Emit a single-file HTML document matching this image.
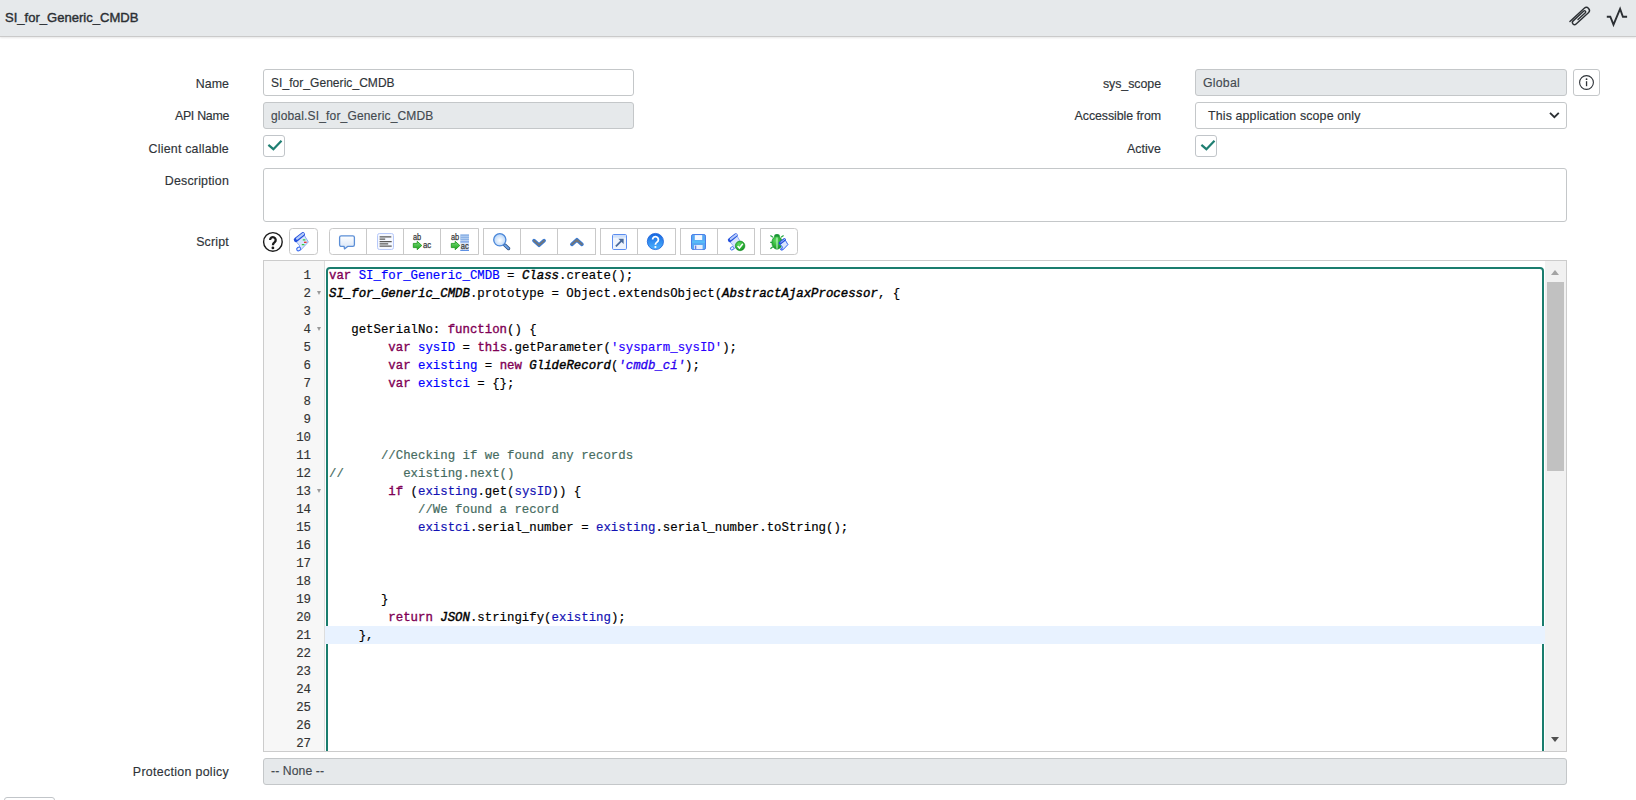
<!DOCTYPE html>
<html lang="en">
<head>
<meta charset="utf-8">
<title>SI_for_Generic_CMDB | Script Include</title>
<style>
*{box-sizing:border-box;margin:0;padding:0}
html,body{width:1636px;height:800px;overflow:hidden;background:#fff}
body{font-family:"Liberation Sans",sans-serif;font-size:12.4px;color:#2e3338;position:relative;-webkit-text-stroke:0.15px}
.abs{position:absolute}
#hdr{position:absolute;left:0;top:0;width:1636px;height:37px;background:#e6e9eb;border-bottom:1px solid #cacaca;box-shadow:0 1px 2px rgba(0,0,0,.10)}
#title{position:absolute;left:5px;top:9px;transform:translateY(0.6px);font-size:13.05px;font-weight:normal;-webkit-text-stroke:0.4px #2b2f33;color:#2b2f33;white-space:nowrap;line-height:16px}
.lbl{position:absolute;text-align:right;white-space:nowrap;line-height:16px;height:16px;color:#2e3338}
.l1{right:1407px}
.l2{right:475px}
.inp{position:absolute;height:27px;border:1px solid #c4c7c9;border-radius:3px;background:#fff;line-height:25px;padding-left:7px;white-space:nowrap;color:#2e3338}
.ro{background:#e6e9eb;color:#444a50}
.chk{position:absolute;width:22px;height:22px;border:1px solid #c1c5c9;border-radius:3px;background:#fff}

#ed{overflow:hidden}
#gut{position:absolute;left:0;top:0;width:61px;height:490px;background:#f7f7f7;border-right:1px solid #ddd}
.ln{position:absolute;left:0;width:47px;text-align:right;height:18px;line-height:18px;font-family:"Liberation Mono",monospace;font-size:12.37px;color:#333}
.fold{position:absolute;left:52.5px;width:0;height:0;border-left:2.75px solid transparent;border-right:2.75px solid transparent;border-top:4.2px solid #999}
#focus{position:absolute;left:62px;top:6px;width:1218px;height:500px;border:2px solid #1a7d6e;border-radius:4px}
#act{position:absolute;left:62px;top:365px;width:1219px;height:18px;background:#e8f2ff}
.cl{position:absolute;left:65px;height:18px;line-height:18px;white-space:pre;font-family:"Liberation Mono",monospace;font-size:12.37px;color:#000;-webkit-text-stroke:0.18px}
.k{color:#7f0055;-webkit-text-stroke:0.35px #7f0055}.d{color:#0000ff}.v{color:#1212b4}.s{color:#2a00ff}.c{color:#456b60}.g{font-weight:normal;font-style:italic;color:#000;-webkit-text-stroke:0.42px #000}.t{font-style:italic;font-weight:normal;color:#2a00f0;-webkit-text-stroke:0.3px #2a00f0}
#sb{position:absolute;left:1281px;top:0;width:21px;height:490px;background:#f1f1f1}
#sbt{position:absolute;left:2px;top:21px;width:17px;height:189px;background:#c1c1c1}
.arr{position:absolute;left:6px;width:0;height:0;border-left:4.5px solid transparent;border-right:4.5px solid transparent}
</style>
</head>
<body>
<div id="hdr">
  <div id="title">SI_for_Generic_CMDB</div>
  <svg class="abs" style="left:1560px;top:0px" width="76" height="36" viewBox="1560 0 76 36"><g fill="none" stroke="#2b2f33" stroke-linecap="round" stroke-linejoin="round" stroke-width="1.4" transform="translate(1580.3 16.1) rotate(-42.7)"><path d="M-11.3 -3.05 L8.2 -3.05 A3.05 3.05 0 0 1 8.2 3.05 L-8.5 3.05 A2.2 2.2 0 0 1 -8.5 -1.35 L6 -1.35 A1.15 1.15 0 0 1 6 0.95 L-4 0.95"/></g><path d="M1606.8 16.7 H1610.3 L1613.5 24.7 L1620.1 8.9 L1622.9 16.7 H1627.1" fill="none" stroke="#2b2f33" stroke-width="1.85" stroke-linejoin="miter" stroke-miterlimit="6" stroke-linecap="butt"/></svg>
</div>

<!-- left column -->
<div class="lbl l1" style="top:76px;letter-spacing:0.05px">Name</div>
<div class="inp" style="left:263px;top:69px;width:371px;font-size:12px;letter-spacing:0.05px;line-height:27px">SI_for_Generic_CMDB</div>
<div class="lbl l1" style="top:108px;letter-spacing:-0.3px">API Name</div>
<div class="inp ro" style="left:263px;top:102px;width:371px;font-size:12px;letter-spacing:0.17px;line-height:27px">global.SI_for_Generic_CMDB</div>
<div class="lbl l1" style="top:141px;letter-spacing:0.22px">Client callable</div>
<div class="chk" style="left:263px;top:135px"><svg width="20" height="20" viewBox="0 0 20 20" style="position:absolute;left:0;top:0"><path d="M4.4 8.8 L9.4 13.2 L17.5 4.7" fill="none" stroke="#1f7f72" stroke-width="2.2" stroke-linecap="butt" stroke-linejoin="miter"/></svg></div>
<div class="lbl l1" style="top:173px;letter-spacing:0.2px">Description</div>
<div class="inp" style="left:263px;top:168px;width:1304px;height:54px"></div>
<div class="lbl l1" style="top:234px;letter-spacing:0.2px">Script</div>

<svg id="tb" class="abs" style="left:258px;top:224px" width="546" height="36" viewBox="258 224 546 36">
<defs>
<linearGradient id="gB" x1="0" y1="0" x2="0" y2="1"><stop offset="0" stop-color="#ffffff"/><stop offset="1" stop-color="#d6e4f7"/></linearGradient>
<radialGradient id="gM" cx="0.5" cy="0.55" r="0.6"><stop offset="0" stop-color="#ffffff"/><stop offset="1" stop-color="#a9cdf7"/></radialGradient>
<linearGradient id="gH" x1="0" y1="0" x2="0" y2="1"><stop offset="0" stop-color="#1565e0"/><stop offset="1" stop-color="#4db4ff"/></linearGradient>
<radialGradient id="gG" cx="0.4" cy="0.35" r="0.7"><stop offset="0" stop-color="#5fe05f"/><stop offset="1" stop-color="#0f8f1f"/></radialGradient>
<linearGradient id="gA" x1="0" y1="0" x2="0" y2="1"><stop offset="0" stop-color="#7be07b"/><stop offset="1" stop-color="#18a018"/></linearGradient>
</defs>
<!-- button frames -->
<g fill="#fff" stroke="#c9c9c9" stroke-width="1">
<rect x="289.5" y="228.5" width="28" height="26" rx="3"/>
<path d="M332.5 228.5 H478.5 V254.5 H332.5 a3 3 0 0 1 -3 -3 V231.5 a3 3 0 0 1 3 -3 z"/>
<rect x="483.5" y="228.5" width="112" height="26"/>
<rect x="600.5" y="228.5" width="75" height="26"/>
<rect x="680.5" y="228.5" width="74" height="26"/>
<path d="M760.5 228.5 H794.5 a3 3 0 0 1 3 3 V251.5 a3 3 0 0 1 -3 3 H760.5 z"/>
<path d="M366.5 228.5 V254.5 M403.5 228.5 V254.5 M440.5 228.5 V254.5 M520.5 228.5 V254.5 M557.5 228.5 V254.5 M637.5 228.5 V254.5 M717.5 228.5 V254.5" fill="none"/>
</g>
<!-- 1 help outline -->
<circle cx="272.9" cy="241.9" r="9.3" fill="#fff" stroke="#1c1c1c" stroke-width="1.4"/>
<path d="M270.1 239.9 a2.8 2.8 0 1 1 4.6 2.2 c-1.3 1 -1.8 1.7 -1.8 3.1" fill="none" stroke="#1c1c1c" stroke-width="2.3"/>
<circle cx="272.9" cy="247.9" r="1.4" fill="#1c1c1c"/>
<!-- 2 script -->
<g id="scr">
<g id="scrb">
<path d="M295.4 240.8 L303.9 234.6 L308.3 242 L300.6 250.2 L296.8 249.8 L299.9 246 z" fill="#d9e5fd" stroke="#7fa0f2" stroke-width="0.9" stroke-linejoin="round"/>
<path d="M296 239.8 L302.8 234.4" stroke="#2450dc" stroke-width="4.4" stroke-linecap="round"/>
<path d="M297.1 238.6 L303.2 233.9" stroke="#b4cbfb" stroke-width="2.3" stroke-linecap="round"/>
<ellipse cx="298.7" cy="248.9" rx="2.1" ry="1.7" transform="rotate(-35 298.7 248.9)" fill="#e6eeff" stroke="#3a6cf0" stroke-width="1"/>
</g>
<path d="M302.8 239.9 H305.4 M301.8 244.7 H304.4" stroke="#2ecc40" stroke-width="1.3"/>
<path d="M304 242.3 H306.6" stroke="#e53030" stroke-width="1.3"/>
</g>
<!-- 3 comment -->
<path d="M341.2 235.8 H352.8 a1.6 1.6 0 0 1 1.6 1.6 V244.8 a1.6 1.6 0 0 1 -1.6 1.6 H347.6 L344.5 248.9 L344.1 246.4 H341.2 a1.6 1.6 0 0 1 -1.6 -1.6 V237.4 a1.6 1.6 0 0 1 1.6 -1.6 z" fill="url(#gB)" stroke="#5b8ed6" stroke-width="1.3" stroke-linejoin="round"/>
<!-- 4 lines -->
<rect x="377.5" y="233.5" width="16" height="16" rx="2" fill="#f5f8ff" stroke="#b7c9fa" stroke-width="1"/>
<path d="M379.6 236.9 H391.3 M379.6 239.2 H385.2 M379.6 241.5 H391.7 M379.6 243.8 H388.2 M379.6 246.1 H391.7" stroke="#5a5a5a" stroke-width="1.25"/>
<!-- 5 replace -->
<g font-family="Liberation Sans, sans-serif" font-size="8.6" fill="#3a3a3a" stroke="#3a3a3a" stroke-width="0.25">
<text x="413" y="239.8" textLength="8.2" lengthAdjust="spacingAndGlyphs">ab</text>
<text x="423" y="247.8" textLength="8.2" lengthAdjust="spacingAndGlyphs">ac</text>
<text x="451" y="239.8" textLength="8.2" lengthAdjust="spacingAndGlyphs">ab</text>
</g>
<path id="arw" d="M413.3 243.4 H417.2 V241.3 L421.8 245.5 L417.2 249.7 V247.6 H413.3 z" fill="url(#gA)" stroke="#149414" stroke-width="0.8" stroke-linejoin="round"/>
<!-- 6 replace all -->
<path d="M451.3 243.4 H455.2 V241.3 L459.8 245.5 L455.2 249.7 V247.6 H451.3 z" fill="url(#gA)" stroke="#149414" stroke-width="0.8" stroke-linejoin="round"/>
<rect x="460.3" y="234.3" width="8.7" height="6.3" fill="#8db3e6"/>
<path d="M460.3 236.4 H469 M460.3 238.5 H469" stroke="#b9d2f2" stroke-width="0.8"/>
<rect x="460.3" y="241.6" width="8.7" height="9" fill="#dbe6f5"/>
<path d="M460.3 241.9 H469 M460.3 250.4 H469" stroke="#3a78e0" stroke-width="0.9"/>
<text x="460.8" y="248.6" font-family="Liberation Sans, sans-serif" font-size="8.6" fill="#3a3a3a" stroke="#3a3a3a" stroke-width="0.25" textLength="8" lengthAdjust="spacingAndGlyphs">ac</text>
<!-- 7 magnifier -->
<path d="M504.8 245 L508.5 248.5" stroke="#2f4f80" stroke-width="3.4" stroke-linecap="round"/>
<path d="M505 245.2 L508.4 248.4" stroke="#6ea4e8" stroke-width="1.9" stroke-linecap="round"/>
<circle cx="499.8" cy="239.8" r="6.1" fill="url(#gM)" stroke="#4a86d8" stroke-width="1.3"/>
<!-- 8,9 chevrons -->
<path d="M534 240.7 L539.05 245.2 L544.1 240.7" fill="none" stroke="#3b7bd2" stroke-width="3.7" stroke-linecap="round" stroke-linejoin="round"/>
<path d="M534 240.7 L539.05 245.2 L544.1 240.7" fill="none" stroke="#757575" stroke-width="1.7" stroke-linecap="round" stroke-linejoin="round"/>
<path d="M571.9 244.3 L576.9 239.8 L581.9 244.3" fill="none" stroke="#3b7bd2" stroke-width="3.7" stroke-linecap="round" stroke-linejoin="round"/>
<path d="M571.9 244.3 L576.9 239.8 L581.9 244.3" fill="none" stroke="#757575" stroke-width="1.7" stroke-linecap="round" stroke-linejoin="round"/>
<!-- 10 popout -->
<rect x="612.5" y="234.5" width="14" height="15" rx="1.2" fill="#eef4fd" stroke="#5b8df0" stroke-width="1"/>
<rect x="613" y="235" width="13" height="2.6" fill="#cfe0fa"/>
<path d="M615.9 246.3 L621.6 240.6" stroke="#48699a" stroke-width="1.8"/>
<path d="M618.4 238.7 H623.6 V243.9 z" fill="#48699a"/>
<!-- 11 help blue -->
<circle cx="655.4" cy="241.5" r="8.1" fill="url(#gH)" stroke="#1a60d8" stroke-width="0.8"/>
<path d="M652.6 239.6 a2.9 2.9 0 1 1 4.6 2.3 c-1.3 1 -1.8 1.5 -1.8 2.9" fill="none" stroke="#fff" stroke-width="1.8"/>
<circle cx="655.4" cy="247" r="1.1" fill="#fff"/>
<!-- 12 save -->
<rect x="691.5" y="234.5" width="14" height="15" rx="1.6" fill="#58a9f3" stroke="#4a7ee8" stroke-width="1"/>
<rect x="692" y="240.6" width="13" height="2.4" fill="#57bbf9"/>
<rect x="694.8" y="235.1" width="7.4" height="4.9" fill="#f6f9ff"/>
<rect x="694.2" y="245" width="8.4" height="4.2" fill="#e9eefc"/>
<rect x="695" y="245.5" width="1.3" height="3.6" fill="#6c7fe2"/>
<!-- 13 script check -->
<g>
<use href="#scrb" transform="translate(469.3 24.3) scale(0.88 0.9)"/>
<circle cx="740.1" cy="245.9" r="4.8" fill="url(#gG)" stroke="#0e8a1c" stroke-width="0.6"/>
<path d="M737.6 246 L739.4 248 L742.8 243.8" fill="none" stroke="#fff" stroke-width="1.5"/>
</g>
<!-- 14 bug -->
<g>
<path d="M773 237.2 L770.4 235.4 M770.2 242.3 H772.4 M772.8 246.8 L770.4 248.8 M781 237.2 L783.6 235.4 M781.6 242.3 H783.8" stroke="#25a844" stroke-width="1.2" fill="none"/>
<ellipse cx="777" cy="236" rx="2.8" ry="2.1" fill="#1a9636"/>
<ellipse cx="777" cy="242.6" rx="5.2" ry="6.6" fill="url(#gG)" stroke="#149030" stroke-width="0.6"/>
<path d="M777 237.4 V248.8" stroke="#c4f4cc" stroke-width="1.1"/>
<use href="#scrb" transform="translate(590.6 89.7) scale(0.64)"/>
<path d="M779.7 243.8 L785.1 239.8 L787.9 244.6 L783 249.8 L780.6 249.6 L782.5 247.1 z" fill="none" stroke="#3a6cf0" stroke-width="0.9" stroke-linejoin="round"/>
<path d="M780.2 243 L784.4 239.7" stroke="#2450dc" stroke-width="2.6" stroke-linecap="round"/>
<path d="M780.9 242.3 L784.6 239.4" stroke="#a9c3fb" stroke-width="1" stroke-linecap="round"/>
</g>
</svg>

<!-- right column -->
<div class="lbl l2" style="top:76px;letter-spacing:-0.05px">sys_scope</div>
<div class="inp ro" style="left:1195px;top:69px;width:372px;font-size:12.3px;letter-spacing:0.24px;line-height:27px">Global</div>
<div class="lbl l2" style="top:108px;letter-spacing:-0.07px">Accessible from</div>
<div class="inp" style="left:1195px;top:102px;width:372px;padding-left:12px;letter-spacing:0.14px;line-height:27px">This application scope only<svg width="14" height="10" viewBox="0 0 14 10" style="position:absolute;left:352px;top:8px"><path d="M2 1.9 L6.4 6.1 L10.8 1.9" fill="none" stroke="#2b2f33" stroke-width="1.9"/></svg></div>
<div class="lbl l2" style="top:141px;letter-spacing:0.05px">Active</div>
<div class="chk" style="left:1195px;top:135px"><svg width="20" height="20" viewBox="0 0 20 20" style="position:absolute;left:0.7px;top:0"><path d="M4.4 8.8 L9.4 13.2 L17.5 4.7" fill="none" stroke="#1f7f72" stroke-width="2.2" stroke-linecap="butt" stroke-linejoin="miter"/></svg></div>
<div class="inp" style="left:1573px;top:69px;width:27px;padding:0"><svg width="25" height="25" viewBox="0 0 25 25" style="position:absolute;left:0;top:0"><circle cx="12.5" cy="12.5" r="6.9" fill="none" stroke="#2e3338" stroke-width="1.1"/><rect x="11.9" y="11.2" width="1.3" height="5" fill="#2e3338"/><circle cx="12.55" cy="9.2" r="0.9" fill="#2e3338"/></svg></div>

<!-- editor -->
<div id="ed" class="abs" style="left:263px;top:260px;width:1304px;height:492px;border:1px solid #ccc;background:#fff">
<div id="act"></div>
<div id="focus"></div>
<div id="act2" style="position:absolute;left:61px;top:365px;width:1220px;height:18px;background:#e8f2ff"></div>
<div id="gut">
<div class="ln" style="top:6px">1</div>
<div class="ln" style="top:24px">2</div>
<div class="fold" style="top:30px"></div>
<div class="ln" style="top:42px">3</div>
<div class="ln" style="top:60px">4</div>
<div class="fold" style="top:66px"></div>
<div class="ln" style="top:78px">5</div>
<div class="ln" style="top:96px">6</div>
<div class="ln" style="top:114px">7</div>
<div class="ln" style="top:132px">8</div>
<div class="ln" style="top:150px">9</div>
<div class="ln" style="top:168px">10</div>
<div class="ln" style="top:186px">11</div>
<div class="ln" style="top:204px">12</div>
<div class="ln" style="top:222px">13</div>
<div class="fold" style="top:228px"></div>
<div class="ln" style="top:240px">14</div>
<div class="ln" style="top:258px">15</div>
<div class="ln" style="top:276px">16</div>
<div class="ln" style="top:294px">17</div>
<div class="ln" style="top:312px">18</div>
<div class="ln" style="top:330px">19</div>
<div class="ln" style="top:348px">20</div>
<div class="ln" style="top:366px">21</div>
<div class="ln" style="top:384px">22</div>
<div class="ln" style="top:402px">23</div>
<div class="ln" style="top:420px">24</div>
<div class="ln" style="top:438px">25</div>
<div class="ln" style="top:456px">26</div>
<div class="ln" style="top:474px">27</div>
</div>
<div class="cl" style="top:6px"><span class="k">var</span> <span class="d">SI_for_Generic_CMDB</span> = <span class="g">Class</span>.create();</div>
<div class="cl" style="top:24px"><span class="g">SI_for_Generic_CMDB</span>.prototype = Object.extendsObject(<span class="g">AbstractAjaxProcessor</span>, {</div>
<div class="cl" style="top:60px">   getSerialNo: <span class="k">function</span>() {</div>
<div class="cl" style="top:78px">        <span class="k">var</span> <span class="d">sysID</span> = <span class="k">this</span>.getParameter(<span class="s">'sysparm_sysID'</span>);</div>
<div class="cl" style="top:96px">        <span class="k">var</span> <span class="d">existing</span> = <span class="k">new</span> <span class="g">GlideRecord</span>(<span class="t">'cmdb_ci'</span>);</div>
<div class="cl" style="top:114px">        <span class="k">var</span> <span class="d">existci</span> = {};</div>
<div class="cl" style="top:186px">       <span class="c">//Checking if we found any records</span></div>
<div class="cl" style="top:204px"><span class="c">//        existing.next()</span></div>
<div class="cl" style="top:222px">        <span class="k">if</span> (<span class="v">existing</span>.get(<span class="v">sysID</span>)) {</div>
<div class="cl" style="top:240px">            <span class="c">//We found a record</span></div>
<div class="cl" style="top:258px">            <span class="v">existci</span>.serial_number = <span class="v">existing</span>.serial_number.toString();</div>
<div class="cl" style="top:330px">       }</div>
<div class="cl" style="top:348px">        <span class="k">return</span> <span class="g">JSON</span>.stringify(<span class="v">existing</span>);</div>
<div class="cl" style="top:366px">    },</div>
<div id="sb"><div class="arr" style="top:9px;border-bottom:5px solid #a3a3a3"></div><div id="sbt"></div><div class="arr" style="top:476px;border-top:5px solid #505050"></div></div>
</div>

<!-- protection policy -->
<div class="lbl l1" style="top:763.5px;letter-spacing:0.31px">Protection policy</div>
<div class="inp ro" style="left:263px;top:758px;width:1304px;font-size:12.2px;letter-spacing:0.1px">-- None --</div>
<div class="abs" style="left:4px;top:797px;width:51px;height:20px;border:1px solid #c1c5c9;border-radius:3px;background:#fff"></div>
</body>
</html>
